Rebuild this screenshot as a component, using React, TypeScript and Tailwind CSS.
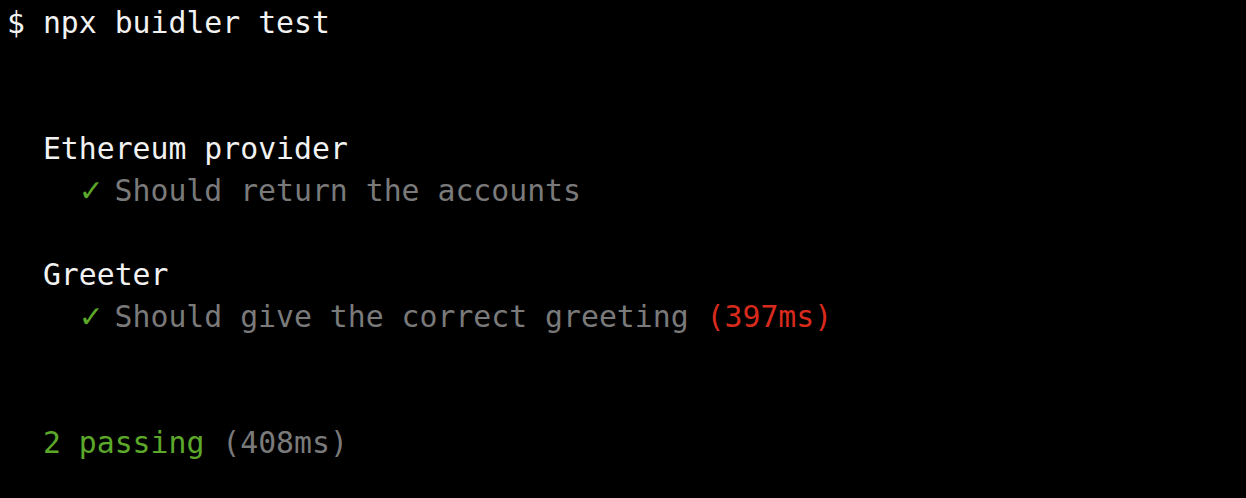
// Terminal output of a test run: monospace rows on black, fixed 42px line height.
const mono = "font-['DejaVu_Sans_Mono','Liberation_Mono',monospace]";

function Row({ children }: { children?: React.ReactNode }) {
  return <div className="h-[42px] leading-[42px] whitespace-pre">{children ?? " "}</div>;
}

// Check mark plus the space after it: two columns wide.
function Check() {
  return (
    <span className="inline-block w-[35.8px] font-['DejaVu_Sans',sans-serif] font-bold text-[#5ca82a]">
      ✓
    </span>
  );
}

export default function App() {
  return (
    <div className={`w-[1246px] h-[498px] bg-black pt-[2px] pl-[7px] text-[29.8px] text-[#f2f2f2] overflow-hidden ${mono}`}>
      <Row>$ npx buidler test</Row>
      <Row />
      <Row />
      <Row>{"  "}Ethereum provider</Row>
      <Row>
        {"    "}
        <Check />
        <span className="text-[#7a7a7a]">Should return the accounts</span>
      </Row>
      <Row />
      <Row>{"  "}Greeter</Row>
      <Row>
        {"    "}
        <Check />
        <span className="text-[#7a7a7a]">Should give the correct greeting </span>
        <span className="text-[#d92b1d]">(397ms)</span>
      </Row>
      <Row />
      <Row />
      <Row>
        {"  "}
        <span className="text-[#5ca82a]">2 passing</span>
        <span className="text-[#7a7a7a]"> (408ms)</span>
      </Row>
    </div>
  );
}
